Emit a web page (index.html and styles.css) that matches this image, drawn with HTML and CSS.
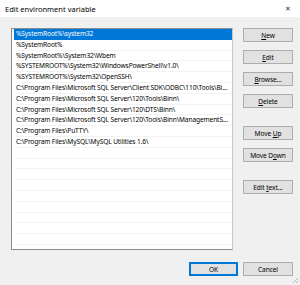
FILE: index.html
```html
<!DOCTYPE html>
<html lang="en">
<head>
    <meta charset="UTF-8">
    <title>Edit environment variable</title>
    <link rel="stylesheet" href="styles.css">
</head>
<body>

    <div class="dialog">
        <!-- Title bar -->
        <div class="titlebar">
            <span class="title">Edit environment variable</span>
            <span class="close">&#x2715;</span>
        </div>

        <div class="content">
            <!-- Path list -->
            <div class="list">
                <div class="row selected">%SystemRoot%\system32</div>
                <div class="row">%SystemRoot%</div>
                <div class="row">%SystemRoot%\System32\Wbem</div>
                <div class="row">%SYSTEMROOT%\System32\WindowsPowerShell\v1.0\</div>
                <div class="row">%SYSTEMROOT%\System32\OpenSSH\</div>
                <div class="row">C:\Program Files\Microsoft SQL Server\Client SDK\ODBC\110\Tools\Bi...</div>
                <div class="row">C:\Program Files\Microsoft SQL Server\120\Tools\Binn\</div>
                <div class="row">C:\Program Files\Microsoft SQL Server\120\DTS\Binn\</div>
                <div class="row">C:\Program Files\Microsoft SQL Server\120\Tools\Binn\ManagementS...</div>
                <div class="row">C:\Program Files\PuTTY\</div>
                <div class="row">C:\Program Files\MySQL\MySQL Utilities 1.6\</div>
                <div class="row"></div>
                <div class="row"></div>
                <div class="row"></div>
                <div class="row"></div>
                <div class="row"></div>
                <div class="row"></div>
                <div class="row"></div>
                <div class="row"></div>
                <div class="row"></div>
            </div>

            <!-- Side buttons -->
            <div class="side">
                <div class="group">
                    <button><u>N</u>ew</button>
                    <button><u>E</u>dit</button>
                    <button><u>B</u>rowse...</button>
                    <button><u>D</u>elete</button>
                </div>
                <div class="group">
                    <button>Move <u>U</u>p</button>
                    <button>Move D<u>o</u>wn</button>
                </div>
                <div class="group">
                    <button>Edit <u>t</u>ext...</button>
                </div>
            </div>
        </div>

        <!-- Bottom buttons -->
        <div class="footer">
            <button class="default">OK</button>
            <button>Cancel</button>
        </div>
        <div class="grip"></div>
    </div>

</body>
</html>
```

FILE: styles.css
```css
body {
    margin: 0;
    padding: 0;
    font-family: 'Noto Sans', sans-serif;
    font-size: 7px;
    color: #000;
}

.dialog {
    width: 300px;
    height: 285px;
    background-color: #f0f0f0;
    position: relative;
    overflow: hidden;
}

.titlebar {
    height: 17px;
    background-color: #fff;
    display: flex;
    justify-content: space-between;
    align-items: center;
    padding: 0 9px 0 5px;
}

.title {
    font-size: 7.5px;
    color: #000;
}

.close {
    font-size: 7px;
    color: #333;
}

.content {
    display: flex;
    padding: 11px 7px 0 11px;
    gap: 10px;
}

.list {
    width: 220px;
    height: 220px;
    background-color: #fff;
    border: 1px solid #8c8c8c;
    border-right-color: #c8c8c8;
    border-bottom-color: #8c8c8c;
    padding: 0 0 0 2px;
    overflow: hidden;
}

.row {
    height: 10.8px;
    line-height: 10.8px;
    padding-left: 2px;
    font-size: 6.6px;
    letter-spacing: -0.12px;
    border-bottom: 1px solid #f3f3f3;
    box-sizing: border-box;
    white-space: nowrap;
    overflow: hidden;
}

.row.selected {
    background-color: #0078d7;
    color: #fff;
    border-bottom-color: #0078d7;
}

.side {
    display: flex;
    flex-direction: column;
    gap: 18px;
}

.group {
    display: flex;
    flex-direction: column;
    gap: 8px;
}

button {
    width: 50px;
    height: 14px;
    padding: 0;
    font-family: 'Noto Sans', sans-serif;
    font-size: 6.6px;
    letter-spacing: -0.1px;
    color: #000;
    background-color: #e1e1e1;
    border: 1px solid #adadad;
    box-sizing: border-box;
}

.footer {
    display: flex;
    justify-content: flex-end;
    gap: 5px;
    padding: 12px 7px 0 0;
}

.footer button.default {
    width: 49px;
    border: 2px solid #0078d7;
}

.grip {
    position: absolute;
    right: 2px;
    bottom: 2px;
    width: 6px;
    height: 6px;
    background: linear-gradient(135deg, transparent 55%, #b8b8b8 55%, #b8b8b8 65%, transparent 65%, transparent 78%, #b8b8b8 78%, #b8b8b8 88%, transparent 88%);
}
```
